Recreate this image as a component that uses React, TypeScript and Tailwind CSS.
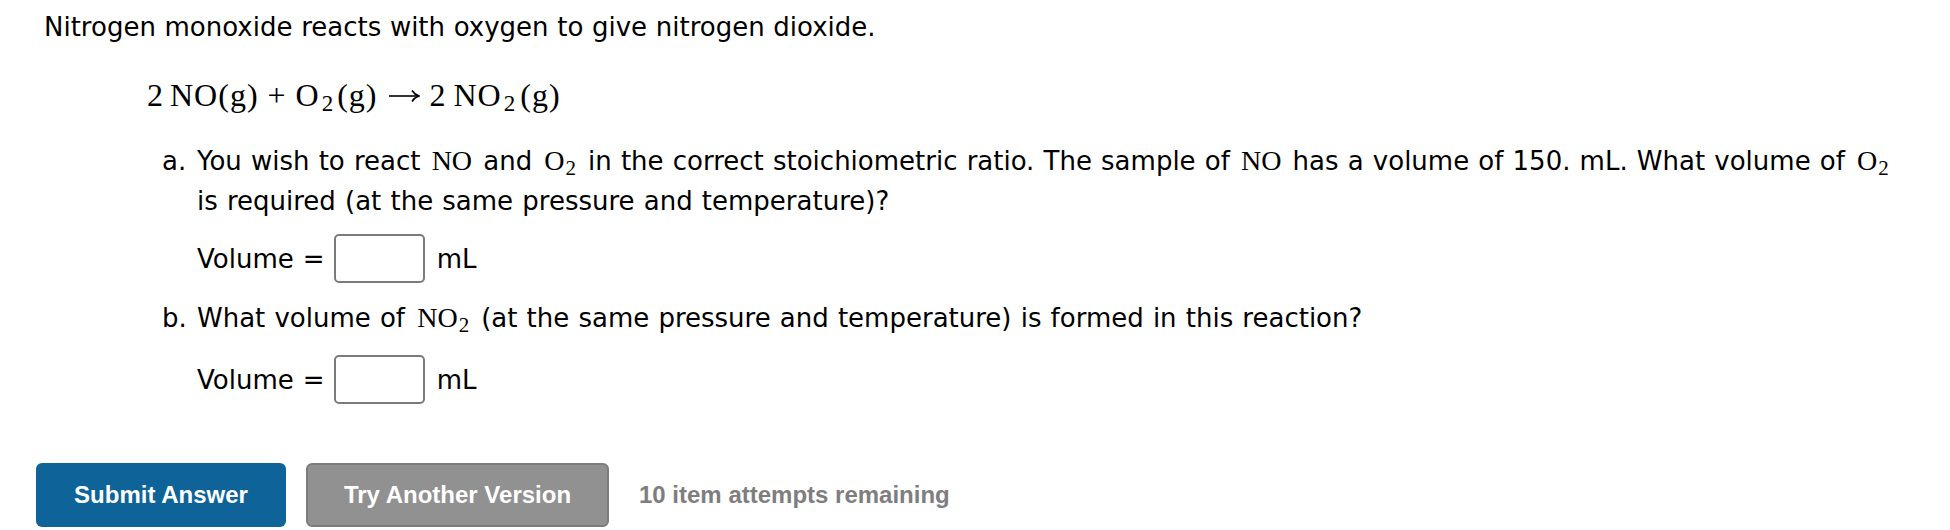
import React from "react";

function Sub({ children, size = "text-[21px]", gap = "ml-[1px]" }: { children: React.ReactNode; size?: string; gap?: string }) {
    return <span className={`relative top-[5px] leading-none ${gap} ${size}`}>{children}</span>;
}

// inline math, set a bit larger than the body text like MathJax does
function M({ children, sub }: { children: React.ReactNode; sub?: boolean }) {
    return (
        <span className={`font-['Liberation_Serif',serif] text-[28px] leading-none ${sub ? "ml-[3px] mr-[12px]" : "ml-[2px] mr-[2px]"}`}>
            {children}
        </span>
    );
}

function Arrow() {
    return (
        <svg width="32" height="16" viewBox="0 0 32 16" className="inline-block mx-[10px] align-[2px]">
            <path d="M1 8 H30" stroke="black" strokeWidth="1.6" fill="none" />
            <path d="M24 2.5 Q26.5 6.5 31 8 Q26.5 9.5 24 13.5" stroke="black" strokeWidth="1.6" fill="none" />
        </svg>
    );
}

function VolumeRow({ className }: { className?: string }) {
    return (
        <div className={`flex items-center pl-[35px] ${className ?? ""}`}>
            <span className="leading-[40px]">Volume =</span>
            <input
                type="text"
                className="ml-[9px] h-[49px] w-[91px] rounded-[5px] border-2 border-[#7b7b7b] bg-white outline-none"
            />
            <span className="ml-[12px] leading-[40px]">mL</span>
        </div>
    );
}

export default function App() {
    return (
        <div className="w-[1950px] h-[530px] bg-white text-black font-['DejaVu_Sans',Verdana,sans-serif] text-[26px] [word-spacing:0.9px] overflow-hidden">
            <div className="pl-[44px] pt-[8px]">
                <p className="leading-[39px] [word-spacing:0.4px]">Nitrogen monoxide reacts with oxygen to give nitrogen dioxide.</p>

                <div className="mt-[29px] ml-[103px] leading-[39px] font-['Liberation_Serif',serif] text-[32px] tracking-[1px] [word-spacing:0px]">
                    2<span className="ml-[6px]">NO(g)</span>
                    <span className="mx-[9px]">+</span>O<Sub size="text-[23px]" gap="ml-[2px]">2</Sub>
                    <span className="ml-[3px]">(g)</span>
                    <Arrow />2<span className="ml-[7px]">NO</span>
                    <Sub size="text-[23px]" gap="ml-[2px]">2</Sub>
                    <span className="ml-[4px]">(g)</span>
                </div>

                <div className="ml-[118px] mt-[26px]">
                    <div className="flex leading-[40px]">
                        <span className="w-[35px] shrink-0">a.</span>
                        <p>
                            You wish to react <M>NO</M> and <M sub>O<Sub>2</Sub></M>in the correct stoichiometric ratio. The
                            sample of <M>NO</M> has a volume of 150. mL. What volume of <M sub>O<Sub>2</Sub></M>
                            <br />
                            is required (at the same pressure and temperature)?
                        </p>
                    </div>

                    <VolumeRow className="mt-[13px]" />

                    <div className="flex leading-[40px] mt-[15px]">
                        <span className="w-[35px] shrink-0">b.</span>
                        <p>
                            What volume of <M sub>NO<Sub>2</Sub></M>(at the same pressure and temperature) is formed in this reaction?
                        </p>
                    </div>

                    <VolumeRow className="mt-[17px]" />
                </div>
            </div>

            <div className="flex items-center pl-[36px] mt-[59px] font-['Liberation_Sans',Arial,sans-serif] font-bold text-[24px] [word-spacing:0px]">
                <button className="h-[64px] w-[250px] rounded-[6px] bg-[#0e6398] text-white">Submit Answer</button>
                <button className="ml-[20px] h-[64px] w-[303px] rounded-[6px] border-2 border-[#7c7c7c] bg-[#919191] text-white">
                    Try Another Version
                </button>
                <span className="ml-[30px] text-[#7e7e7e]">10 item attempts remaining</span>
            </div>
        </div>
    );
}
